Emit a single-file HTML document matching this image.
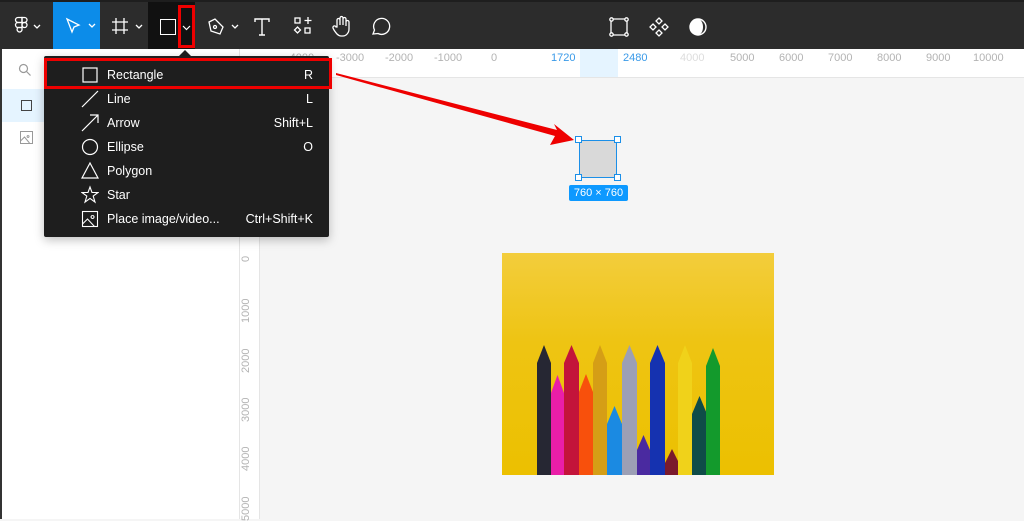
<!DOCTYPE html>
<html><head><meta charset="utf-8"><style>
*{margin:0;padding:0;box-sizing:border-box}
body{width:1024px;height:519px;overflow:hidden;background:#f5f5f5;font-family:"Liberation Sans",sans-serif;position:relative}
.abs{position:absolute}
.tb{left:0;top:0;width:1024px;height:49px;background:#2c2c2c;border-top:2px solid #1e1e1e}
.ico{position:absolute}
.lp{left:0;top:49px;width:240px;height:470px;background:#fff;border-left:2px solid #333;border-right:1px solid #e5e5e5}
.hr{left:240px;top:49px;width:784px;height:29px;background:#fff;border-bottom:1px solid #e5e5e5;font-size:11px;color:#b3b3b3}
.vr{left:240px;top:78px;width:20px;height:441px;background:#fff;border-right:1px solid #e5e5e5;font-size:11px;color:#b3b3b3}
.menu{left:44px;top:56px;width:285px;height:181px;background:#1e1e1e;border-radius:2px;box-shadow:0 3px 10px rgba(0,0,0,.25);color:#fff;font-size:12.5px}
.it{position:absolute;left:0;width:285px;height:24px}
.it .t{position:absolute;left:63px;top:6px}
.it .k{position:absolute;right:16px;top:6px}
.it svg{position:absolute;left:37px;top:3px}
.cr{position:absolute;bottom:0}
</style></head><body>
<div class="abs tb">
 <svg class="ico" style="left:12px;top:14px" width="32" height="22" viewBox="0 0 32 22" fill="none" stroke="#fff" stroke-width="1.3">
  <path d="M6 1.5h4v5H6a2.5 2.5 0 0 1 0-5z"/><path d="M10 1.5h2.5a2.5 2.5 0 0 1 0 5H10z"/>
  <path d="M6 6.5h4v5H6a2.5 2.5 0 0 1 0-5z"/><circle cx="12.5" cy="9" r="2.5"/>
  <path d="M6 11.5h4v2.5a2.5 2.5 0 1 1-4-2.5"/>
  <path d="M22 9l3 3 3-3"/></svg>
 <div class="abs" style="left:53px;top:0;width:47px;height:47px;background:#0c8ce9"></div>
 <svg class="ico" style="left:62px;top:14px" width="36" height="20" viewBox="0 0 36 20" fill="none" stroke="#fff" stroke-width="1.3">
  <path d="M5 3l12 6-5 2-2 5z"/><path d="M27 8l3 3 3-3"/></svg>
 <svg class="ico" style="left:111px;top:14px" width="36" height="20" viewBox="0 0 36 20" fill="none" stroke="#fff" stroke-width="1.3">
  <path d="M5 2v16M13 2v16M1 6h16M1 14h16"/><path d="M25 9l3 3 3-3"/></svg>
 <div class="abs" style="left:148px;top:0;width:47px;height:47px;background:#111"></div>
 <div class="abs" style="left:160px;top:17px;width:16px;height:16px;border:1.5px solid #fff"></div>
 <div class="abs" style="left:178px;top:3px;width:17px;height:43px;border:3px solid #e00;"></div>
 <svg class="ico" style="left:182px;top:22px" width="9" height="8" viewBox="0 0 9 8" fill="none" stroke="#fff" stroke-width="1.2"><path d="M1 2l3.5 3.5L8 2"/></svg>
 <svg class="ico" style="left:205px;top:14px" width="36" height="22" viewBox="0 0 36 22" fill="none" stroke="#fff" stroke-width="1.3">
  <path d="M4 6l6-3 8 8-3 7-9-3z"/><circle cx="10" cy="11" r="1.5"/><path d="M27 9l3 3 3-3"/></svg>
 <svg class="ico" style="left:253px;top:15px" width="18" height="20" viewBox="0 0 18 20" fill="none" stroke="#fff" stroke-width="1.4"><path d="M2 5V2h14v3M9 2v16M6 18h6"/></svg>
 <svg class="ico" style="left:293px;top:14px" width="20" height="20" viewBox="0 0 20 20" fill="none" stroke="#fff" stroke-width="1.3">
  <rect x="2" y="2" width="5" height="5"/><path d="M15 1v7M11.5 4.5h7"/><path d="M4.5 11l3 3-3 3-3-3z"/><rect x="12" y="12" width="5" height="5"/></svg>
 <svg class="ico" style="left:331px;top:13px" width="22" height="22" viewBox="0 0 22 22" fill="none" stroke="#fff" stroke-width="1.3">
  <path d="M6 12V5a1.5 1.5 0 0 1 3 0v5V3a1.5 1.5 0 0 1 3 0v7V4a1.5 1.5 0 0 1 3 0v7V7a1.5 1.5 0 0 1 3 0v7c0 4-3 7-6 7h-2c-3 0-5-3-7-6l-1-2a1.5 1.5 0 0 1 3-1z"/></svg>
 <svg class="ico" style="left:369px;top:14px" width="22" height="22" viewBox="0 0 22 22" fill="none" stroke="#fff" stroke-width="1.3">
  <path d="M4 18l1.5-4A8 8 0 1 1 9 17.5z"/></svg>
 <svg class="ico" style="left:609px;top:15px" width="20" height="20" viewBox="0 0 20 20" fill="none" stroke="#fff" stroke-width="1.3">
  <path d="M4 2h12M4 18h12M2 4v12M18 4v12"/><circle cx="2.5" cy="2.5" r="1.7"/><circle cx="17.5" cy="2.5" r="1.7"/><circle cx="2.5" cy="17.5" r="1.7"/><circle cx="17.5" cy="17.5" r="1.7"/></svg>
 <svg class="ico" style="left:648px;top:14px" width="22" height="22" viewBox="0 0 22 22" fill="none" stroke="#fff" stroke-width="1.3">
  <path d="M11 2l3 3-3 3-3-3zM11 14l3 3-3 3-3-3zM5 8l3 3-3 3-3-3zM17 8l3 3-3 3-3-3z"/></svg>
 <svg class="ico" style="left:688px;top:15px" width="20" height="20" viewBox="0 0 20 20"><circle cx="10" cy="10" r="8" fill="none" stroke="#fff" stroke-width="1.4"/><path d="M10 2a8 8 0 0 0 0 16a5 8 0 0 0 0-16z" fill="#fff"/></svg>
</div>

<div class="abs lp">
 <svg class="abs" style="left:16px;top:14px" width="14" height="14" viewBox="0 0 14 14" fill="none" stroke="#999" stroke-width="1.2"><circle cx="5.5" cy="5.5" r="4"/><path d="M8.5 8.5l4 4"/></svg>
 <div class="abs" style="left:0;top:40px;width:238px;height:33px;background:#e5f4ff"></div>
 <div class="abs" style="left:19px;top:51px;width:11px;height:11px;border:1.3px solid #444"></div>
 <svg class="abs" style="left:18px;top:82px" width="13" height="13" viewBox="0 0 13 13" fill="none" stroke="#999" stroke-width="1"><rect x=".5" y=".5" width="12" height="12"/><path d="M.5 10l4-4 5 6M8 4.5a1 1 0 1 0 .1 0"/></svg>
</div>

<div class="abs hr">
 <span class="abs" style="left:46px;top:3px">-4000</span>
 <span class="abs" style="left:96px;top:3px">-3000</span>
 <span class="abs" style="left:145px;top:3px">-2000</span>
 <span class="abs" style="left:194px;top:3px">-1000</span>
 <span class="abs" style="left:251px;top:3px">0</span>
 <div class="abs" style="left:340px;top:0;width:38px;height:28px;background:#e5f4ff"></div>
 <span class="abs" style="left:311px;top:3px;color:#3a9ae8">1720</span>
 <span class="abs" style="left:383px;top:3px;color:#3a9ae8">2480</span>
 <span class="abs" style="left:440px;top:3px;color:#ddd">4000</span>
 <span class="abs" style="left:490px;top:3px">5000</span>
 <span class="abs" style="left:539px;top:3px">6000</span>
 <span class="abs" style="left:588px;top:3px">7000</span>
 <span class="abs" style="left:637px;top:3px">8000</span>
 <span class="abs" style="left:686px;top:3px">9000</span>
 <span class="abs" style="left:733px;top:3px">10000</span>
</div>
<div class="abs vr">
 <span class="abs" style="left:0;top:184px;transform:rotate(-90deg);transform-origin:0 0">0</span>
 <span class="abs" style="left:0;top:245px;transform:rotate(-90deg);transform-origin:0 0">1000</span>
 <span class="abs" style="left:0;top:295px;transform:rotate(-90deg);transform-origin:0 0">2000</span>
 <span class="abs" style="left:0;top:344px;transform:rotate(-90deg);transform-origin:0 0">3000</span>
 <span class="abs" style="left:0;top:393px;transform:rotate(-90deg);transform-origin:0 0">4000</span>
 <span class="abs" style="left:0;top:443px;transform:rotate(-90deg);transform-origin:0 0">5000</span>
</div>

<div class="abs" style="left:579px;top:140px;width:38px;height:38px;background:#d9d9d9;border:1.5px solid #1b8fe8"></div>
<div class="abs" style="left:575px;top:136px;width:7px;height:7px;background:#fff;border:1px solid #1b8fe8"></div>
<div class="abs" style="left:614px;top:136px;width:7px;height:7px;background:#fff;border:1px solid #1b8fe8"></div>
<div class="abs" style="left:575px;top:174px;width:7px;height:7px;background:#fff;border:1px solid #1b8fe8"></div>
<div class="abs" style="left:614px;top:174px;width:7px;height:7px;background:#fff;border:1px solid #1b8fe8"></div>
<div class="abs" style="left:569px;top:185px;width:59px;height:16px;background:#0d99ff;border-radius:2px;color:#fff;font-size:11px;text-align:center;line-height:16px">760 × 760</div>

<div class="abs" style="left:502px;top:253px;width:272px;height:222px;background:linear-gradient(#f3cd3c,#eec413 40%,#ecc000);overflow:hidden">
 <div class="cr" style="left:35px;width:14px;height:130px;background:#262733;clip-path:polygon(50% 0,100% 18px,100% 100%,0 100%,0 18px)"></div>
 <div class="cr" style="left:49px;width:13px;height:100px;background:#ea1ea8;clip-path:polygon(50% 0,100% 18px,100% 100%,0 100%,0 18px)"></div>
 <div class="cr" style="left:62px;width:15px;height:130px;background:#c3143a;clip-path:polygon(50% 0,100% 18px,100% 100%,0 100%,0 18px)"></div>
 <div class="cr" style="left:77px;width:14px;height:101px;background:#f8500c;clip-path:polygon(50% 0,100% 18px,100% 100%,0 100%,0 18px)"></div>
 <div class="cr" style="left:91px;width:14px;height:130px;background:#d59e16;clip-path:polygon(50% 0,100% 18px,100% 100%,0 100%,0 18px)"></div>
 <div class="cr" style="left:105px;width:15px;height:69px;background:#1b8ae2;clip-path:polygon(50% 0,100% 18px,100% 100%,0 100%,0 18px)"></div>
 <div class="cr" style="left:120px;width:15px;height:130px;background:#9c9fb5;clip-path:polygon(50% 0,100% 18px,100% 100%,0 100%,0 18px)"></div>
 <div class="cr" style="left:135px;width:13px;height:40px;background:#4a2aa0;clip-path:polygon(50% 0,100% 15px,100% 100%,0 100%,0 15px)"></div>
 <div class="cr" style="left:148px;width:15px;height:130px;background:#1532b0;clip-path:polygon(50% 0,100% 18px,100% 100%,0 100%,0 18px)"></div>
 <div class="cr" style="left:163px;width:14px;height:26px;background:#7a1a2c;clip-path:polygon(50% 0,100% 14px,100% 100%,0 100%,0 14px)"></div>
 <div class="cr" style="left:176px;width:14px;height:130px;background:#f0d21a;clip-path:polygon(50% 0,100% 18px,100% 100%,0 100%,0 18px)"></div>
 <div class="cr" style="left:190px;width:15px;height:79px;background:#0f4c48;clip-path:polygon(50% 0,100% 18px,100% 100%,0 100%,0 18px)"></div>
 <div class="cr" style="left:204px;width:14px;height:127px;background:#139a2c;clip-path:polygon(50% 0,100% 18px,100% 100%,0 100%,0 18px)"></div>
</div>

<svg class="abs" style="left:0;top:0" width="1024" height="519"><path d="M336 73L557 130L554 124L574 140L550 145L555 136L336 75z" fill="#e00"/></svg>

<div class="abs" style="left:179px;top:50px;width:0;height:0;border:6px solid transparent;border-bottom-color:#1e1e1e;border-top:0"></div>
<div class="abs menu">
 <div class="it" style="top:6px"><svg width="18" height="20" viewBox="0 0 18 20" fill="none" stroke="#fff" stroke-width="1.2"><rect x="2" y="3" width="14" height="14"/></svg><span class="t">Rectangle</span><span class="k">R</span></div>
 <div class="it" style="top:30px"><svg width="18" height="20" viewBox="0 0 18 20" fill="none" stroke="#fff" stroke-width="1.2"><path d="M1 18L17 2"/></svg><span class="t">Line</span><span class="k">L</span></div>
 <div class="it" style="top:54px"><svg width="18" height="20" viewBox="0 0 18 20" fill="none" stroke="#fff" stroke-width="1.2"><path d="M1 18L17 2M9 2h8v8"/></svg><span class="t">Arrow</span><span class="k">Shift+L</span></div>
 <div class="it" style="top:78px"><svg width="18" height="20" viewBox="0 0 18 20" fill="none" stroke="#fff" stroke-width="1.2"><circle cx="9" cy="10" r="7.5"/></svg><span class="t">Ellipse</span><span class="k">O</span></div>
 <div class="it" style="top:102px"><svg width="18" height="20" viewBox="0 0 18 20" fill="none" stroke="#fff" stroke-width="1.2"><path d="M9 2l8 15H1z"/></svg><span class="t">Polygon</span></div>
 <div class="it" style="top:126px"><svg width="18" height="20" viewBox="0 0 18 20" fill="none" stroke="#fff" stroke-width="1.1"><path d="M9 2l2 5.5h6l-4.8 3.6 1.8 6-5-3.7-5 3.7 1.8-6L1 7.5h6z"/></svg><span class="t">Star</span></div>
 <div class="it" style="top:150px"><svg width="18" height="20" viewBox="0 0 18 20" fill="none" stroke="#fff" stroke-width="1.1"><rect x="1.5" y="2.5" width="15" height="15"/><path d="M1.5 15l5-5 7 7.5M11.5 6.5a1.5 1.5 0 1 0 .1 0"/></svg><span class="t">Place image/video...</span><span class="k">Ctrl+Shift+K</span></div>
</div>
<div class="abs" style="left:44px;top:58px;width:288px;height:31px;border:3px solid #e00"></div>
</body></html>
